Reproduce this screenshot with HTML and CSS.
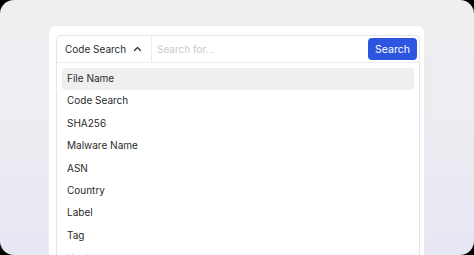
FILE: index.html
```html
<!DOCTYPE html>
<html lang="en">
<head>
    <meta charset="UTF-8">
    <meta name="viewport" content="width=device-width, initial-scale=1.0">
    <title>Search</title>
    <link rel="stylesheet" href="styles.css">
</head>
<body>
    <div class="frame">
        <div class="screen">
            <div class="card">
                <div class="search-bar">
                    <div class="select">
                        <span>Code Search</span>
                        <svg class="chevron" width="9" height="6" viewBox="0 0 9 6">
                            <path d="M1.5 4.5 L4.5 1.5 L7.5 4.5" fill="none" stroke="#333" stroke-width="1.3" stroke-linecap="round" stroke-linejoin="round"/>
                        </svg>
                    </div>
                    <input type="text" class="query" placeholder="Search for...">
                    <button class="search-btn">Search</button>
                </div>
                <div class="dropdown">
                    <div class="item active">File Name</div>
                    <div class="item">Code Search</div>
                    <div class="item">SHA256</div>
                    <div class="item">Malware Name</div>
                    <div class="item">ASN</div>
                    <div class="item">Country</div>
                    <div class="item">Label</div>
                    <div class="item">Tag</div>
                    <div class="item faded">Hostname</div>
                </div>
            </div>
        </div>
    </div>
</body>
</html>
```

FILE: styles.css
```css
*{
    margin: 0;
    padding: 0;
    box-sizing: border-box;
}

body{
    background-color: #000;
    font-family: Inter, "Noto Sans", sans-serif;
}

.frame{
    width: 474px;
    height: 255px;
    overflow: hidden;
    background-color: #000;
}

.screen{
    height: 255px;
    border-radius: 14px;
    background: linear-gradient(180deg, #efeff1 0%, #ececf2 55%, #e7e7f4 100%);
    padding: 25px 0 0 48px;
    overflow: hidden;
}

.card{
    width: 377px;
    height: 240px;
    background-color: #fff;
    border: 1px solid #ebebee;
    border-bottom: none;
    border-radius: 7px 7px 0 0;
    padding: 9px 4px 0 7px;
}

.search-bar{
    display: flex;
    align-items: center;
    height: 28px;
    border: 1px solid #e6e6e8;
    border-bottom: 1px solid #ececee;
    border-radius: 5px 5px 0 0;
}

.select{
    display: flex;
    align-items: center;
    justify-content: space-between;
    width: 95px;
    height: 100%;
    padding: 0 9px 0 8px;
    border-right: 1px solid #ececee;
    font-size: 10px;
    color: #2b2b2b;
}

.chevron{
    margin-top: -1px;
}

.query{
    flex: 1;
    height: 100%;
    border: none;
    outline: none;
    padding-left: 5px;
    font-family: inherit;
    font-size: 10px;
    color: #333;
}

.query::placeholder{
    color: #c9c9cd;
}

.search-btn{
    width: 49px;
    height: 22px;
    margin-right: 2px;
    border: none;
    border-radius: 4px;
    background-color: #2c55e0;
    color: #fff;
    font-family: inherit;
    font-size: 10.5px;
}

.dropdown{
    border: 1px solid #e6e6e8;
    border-top: none;
    padding: 5px 5px 0 5px;
    background-color: #fff;
}

.item{
    height: 22.4px;
    line-height: 21.4px;
    padding-left: 5px;
    font-size: 10px;
    color: #2a2a2a;
    border-radius: 3px;
}

.item.active{
    background-color: #efefef;
}

.item.faded{
    color: #d6d6d8;
}
```
